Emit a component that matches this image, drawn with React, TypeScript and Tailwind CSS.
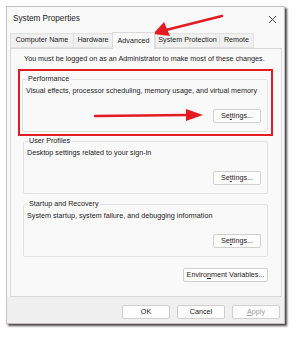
import type { ReactNode } from 'react';

const font = { fontFamily: '"Liberation Sans", Arial, sans-serif' };

function WinButton({ children, className = '', disabled = false }: { children: ReactNode; className?: string; disabled?: boolean }) {
  return (
    <button
      className={`h-[14px] whitespace-nowrap rounded-[2px] border border-[#d0d0d0] bg-[#fdfdfd] text-[7.2px] leading-none ${
        disabled ? 'text-[#a0a0a0]' : 'text-[#1b1b1b]'
      } ${className}`}
    >
      {children}
    </button>
  );
}

function GroupBox({ title, desc, className = '' }: { title: string; desc: string; className?: string }) {
  return (
    <fieldset className={`h-[58px] rounded-[2px] border border-[#e2e2e2] ${className}`}>
      <legend className="ml-[4px] px-[1px] text-[7.2px] leading-[10px] text-[#1b1b1b]">{title}</legend>
      <div className="whitespace-nowrap pl-[3px] pt-[2px] text-[7.2px] leading-[10px] text-[#1b1b1b]">{desc}</div>
      <div className="flex justify-end pr-[6px] pt-[13px]">
        <WinButton className="w-[48px]">
          Se<span className="underline">t</span>tings...
        </WinButton>
      </div>
    </fieldset>
  );
}

export default function App() {
  const tabs = [
    { name: 'Computer Name', w: 'w-[63px]' },
    { name: 'Hardware', w: 'w-[39px]' },
    { name: 'Advanced', w: 'w-[43px]', active: true },
    { name: 'System Protection', w: 'w-[64px]' },
    { name: 'Remote', w: 'w-[35px]' },
  ];

  return (
    <div className="relative h-[338px] w-[300px] overflow-hidden bg-white pl-[6px] pt-[6px]" style={font}>
      {/* dialog */}
      <div className="flex h-[318px] w-[279px] flex-col border border-[#c9bcc3] bg-[#f9f9f9] shadow-[2px_2px_2px_rgba(40,40,40,0.85)]">
        {/* title bar */}
        <div className="flex h-[25px] items-center justify-between pl-[6px] pr-[6px]">
          <span className="text-[8.2px] text-[#1b1b1b]">System Properties</span>
          <svg width="9" height="9" viewBox="0 0 9 9" className="mr-[1px]">
            <path d="M1 1 L8 8 M8 1 L1 8" stroke="#333" strokeWidth="0.9" />
          </svg>
        </div>

        {/* tabs */}
        <div className="flex h-[16px] items-end pl-[3px]">
          {tabs.map((t) =>
            t.active ? (
              <div
                key={t.name}
                className={`${t.w} relative z-10 -mb-px flex h-[17px] items-center justify-center whitespace-nowrap border border-b-0 border-[#d9d9d9] bg-[#f9f9f9] text-[7.2px] text-[#1b1b1b]`}
              >
                {t.name}
              </div>
            ) : (
              <div
                key={t.name}
                className={`${t.w} flex h-[15px] items-center justify-center whitespace-nowrap border border-r-0 border-[#e0e0e0] bg-[#f0f0f0] text-[7.2px] text-[#1b1b1b] last:border-r`}
              >
                {t.name}
              </div>
            )
          )}
        </div>

        {/* tab page */}
        <div className="ml-[3px] mr-[2px] flex h-[249px] flex-col border border-[#d9d9d9] bg-[#f9f9f9]">
          <div className="whitespace-nowrap pl-[13px] pt-[5px] text-[7.2px] leading-[10px] text-[#1b1b1b]">
            You must be logged on as an Administrator to make most of these changes.
          </div>

          <div className="ml-[7px] mr-[8px] mt-[5px] h-[67px] border-2 border-[#e41b23] pl-[2px] pr-[3px] pt-[3px]">
            <GroupBox title="Performance" desc="Visual effects, processor scheduling, memory usage, and virtual memory" />
          </div>

          <GroupBox
            className="ml-[12px] mr-[13px] mt-[0px]"
            title="User Profiles"
            desc="Desktop settings related to your sign-in"
          />
          <GroupBox
            className="ml-[12px] mr-[13px] mt-[5px]"
            title="Startup and Recovery"
            desc="System startup, system failure, and debugging information"
          />

          <div className="mr-[13px] mt-[11px] flex justify-end">
            <WinButton className="w-[85px]">
              Enviro<span className="underline">n</span>ment Variables...
            </WinButton>
          </div>
        </div>

        {/* button bar */}
        <div className="flex flex-1 items-start justify-end gap-[7px] bg-[#f0f0f0] pr-[4px] pt-[8px]">
          <WinButton className="w-[48px]">OK</WinButton>
          <WinButton className="w-[48px]">Cancel</WinButton>
          <WinButton className="w-[48px]" disabled>
            <span className="underline">A</span>pply
          </WinButton>
        </div>
      </div>

      {/* annotation arrows */}
      <svg className="pointer-events-none absolute left-0 top-0" width="300" height="338" viewBox="0 0 300 338">
        <path d="M222 16 L166 30" stroke="#e41b23" strokeWidth="2.5" strokeLinecap="round" />
        <path d="M153 34 L164 22 L170 36 Z" fill="#e41b23" />
        <path d="M95 116 L188 115" stroke="#e41b23" strokeWidth="2.5" strokeLinecap="round" />
        <path d="M203 115 L186 109 L186 121 Z" fill="#e41b23" />
      </svg>
    </div>
  );
}
